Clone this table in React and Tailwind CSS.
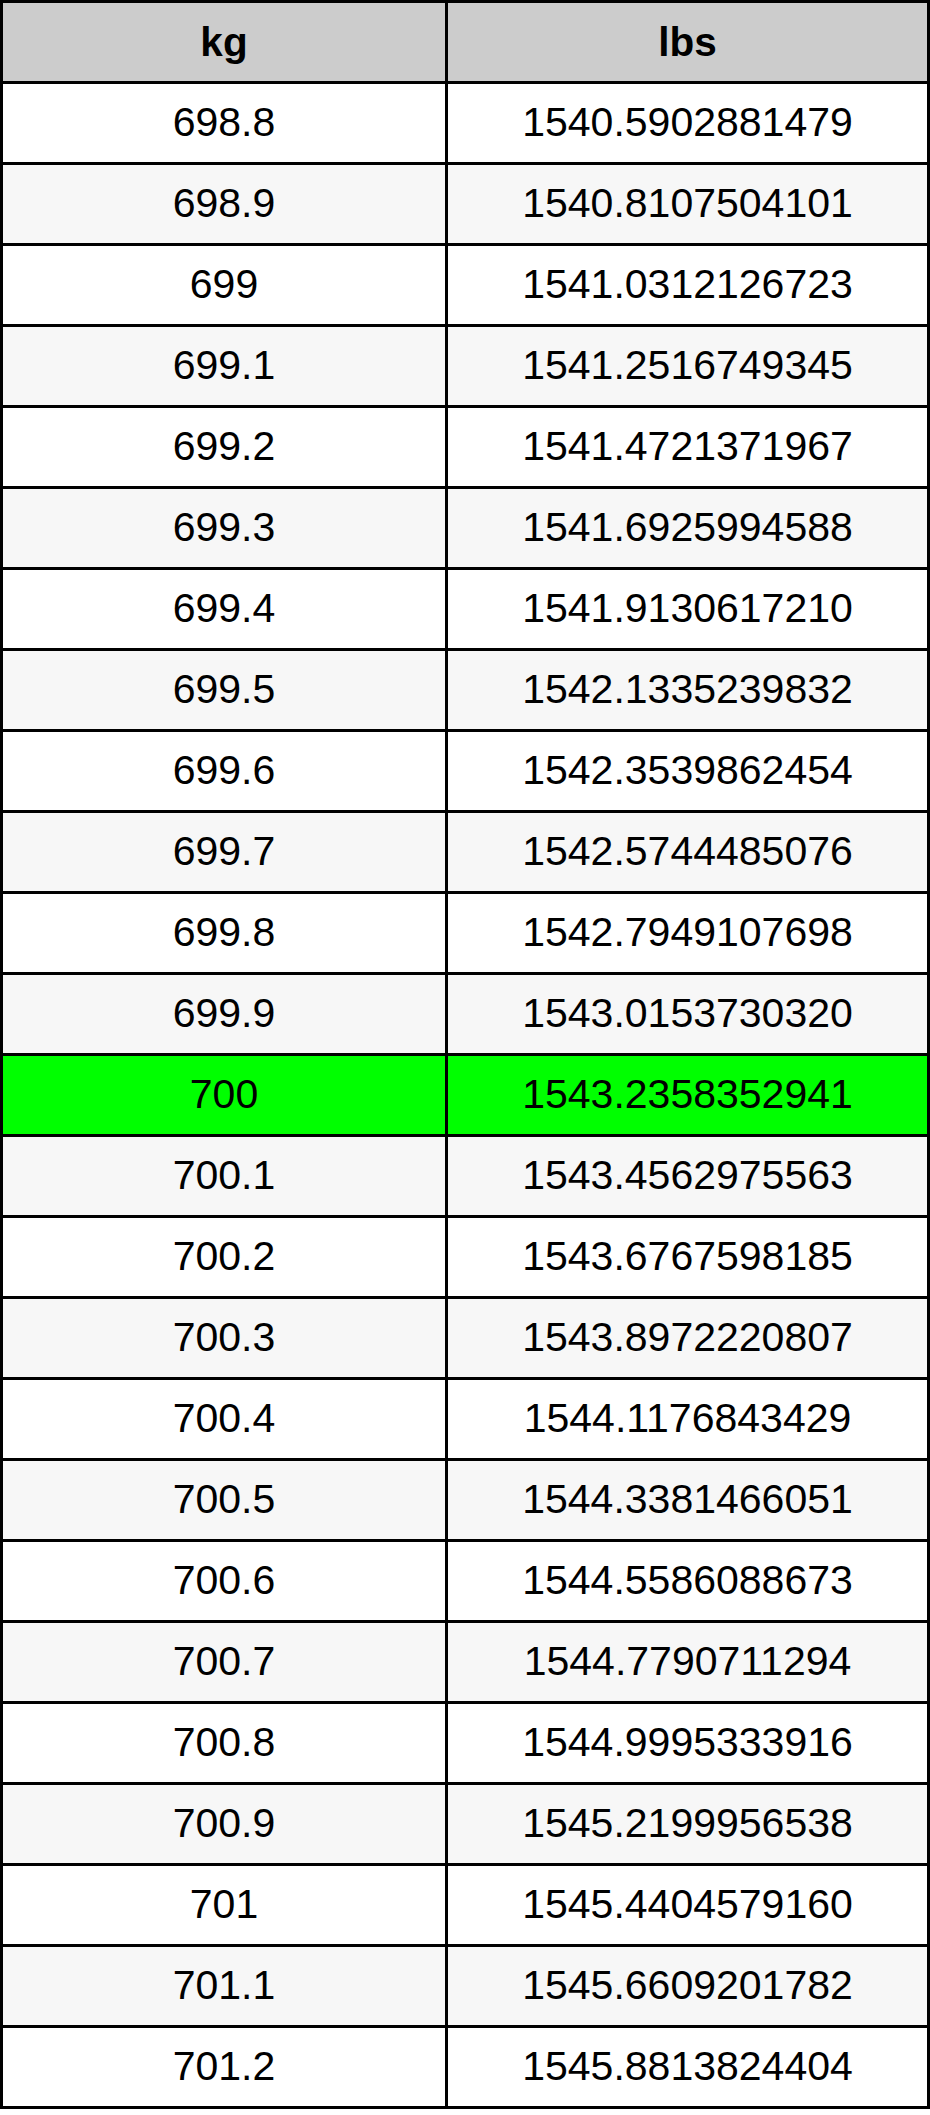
import React from 'react';

const rows = [
  ["698.8", "1540.5902881479"],
  ["698.9", "1540.8107504101"],
  ["699", "1541.0312126723"],
  ["699.1", "1541.2516749345"],
  ["699.2", "1541.4721371967"],
  ["699.3", "1541.6925994588"],
  ["699.4", "1541.9130617210"],
  ["699.5", "1542.1335239832"],
  ["699.6", "1542.3539862454"],
  ["699.7", "1542.5744485076"],
  ["699.8", "1542.7949107698"],
  ["699.9", "1543.0153730320"],
  ["700", "1543.2358352941"],
  ["700.1", "1543.4562975563"],
  ["700.2", "1543.6767598185"],
  ["700.3", "1543.8972220807"],
  ["700.4", "1544.1176843429"],
  ["700.5", "1544.3381466051"],
  ["700.6", "1544.5586088673"],
  ["700.7", "1544.7790711294"],
  ["700.8", "1544.9995333916"],
  ["700.9", "1545.2199956538"],
  ["701", "1545.4404579160"],
  ["701.1", "1545.6609201782"],
  ["701.2", "1545.8813824404"],
];

const App = () => {
  return (
    <div className="w-[930px] bg-white font-['Liberation_Sans',Arial,sans-serif] text-black">
      <div className="border-[3px] border-black">
        <div className="flex h-[78px] bg-[#cccccc] text-[40.5px] font-bold">
          <div className="w-[445px] flex items-center justify-center border-r-[3px] border-black">kg</div>
          <div className="flex-1 flex items-center justify-center">lbs</div>
        </div>
        {rows.map(([kg, lbs], i) => {
          const bg = kg === "700" ? "bg-[#00ff00]" : i % 2 === 0 ? "bg-white" : "bg-[#f7f7f7]";
          return (
            <div key={kg} className={`flex h-[81px] border-t-[3px] border-black text-[41px] ${bg}`}>
              <div className="w-[445px] flex items-center justify-center border-r-[3px] border-black">{kg}</div>
              <div className="flex-1 flex items-center justify-center">{lbs}</div>
            </div>
          );
        })}
      </div>
    </div>
  );
};

export default App;
